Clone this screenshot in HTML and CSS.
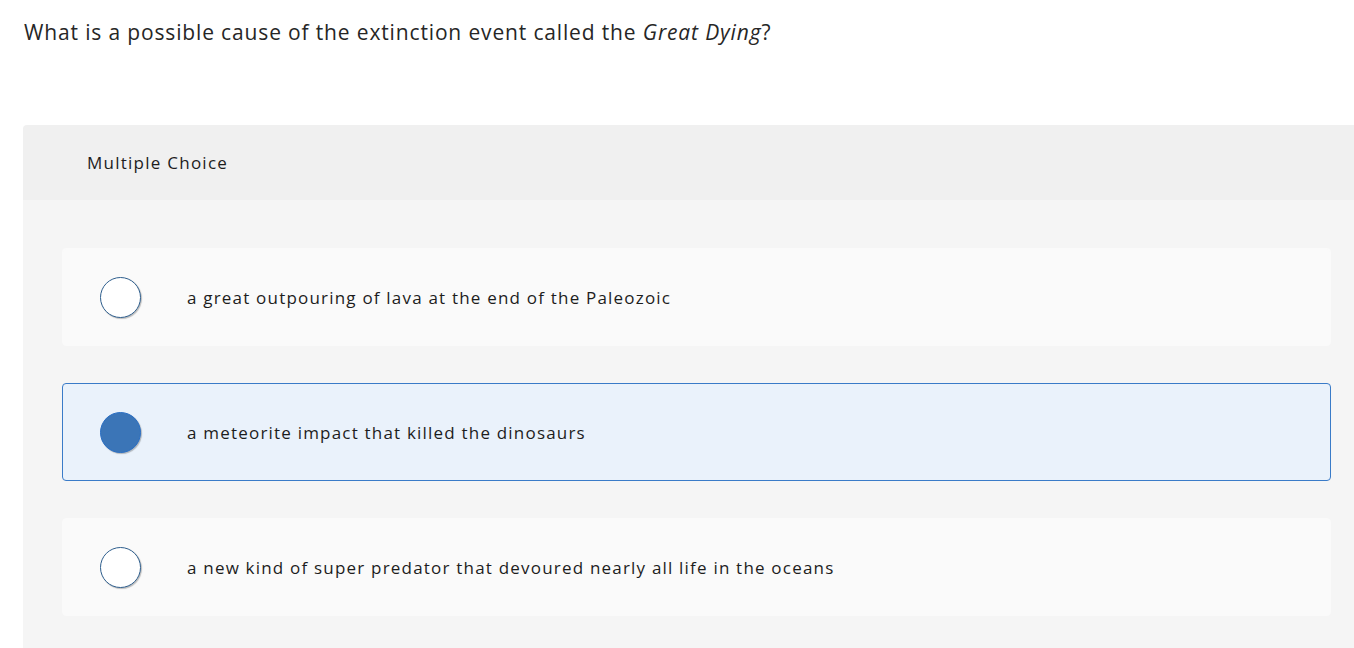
FILE: index.html
```html
<!DOCTYPE html>
<html>
    <head>
        <meta charset="utf-8">
        <title>Question</title>
        <link rel="stylesheet" href="styles.css">
    </head>
    <body>
        <div class="prompt">
            <p>What is a possible cause of the extinction event called the <em>Great Dying</em>?</p>
        </div>
        <div class="panel">
            <div class="panel-head">Multiple Choice</div>
            <div class="panel-body">
                <label class="choice">
                    <span class="radio"></span>
                    <span class="choice-text">a great outpouring of lava at the end of the Paleozoic</span>
                </label>
                <label class="choice selected">
                    <span class="radio"></span>
                    <span class="choice-text">a meteorite impact that killed the dinosaurs</span>
                </label>
                <label class="choice">
                    <span class="radio"></span>
                    <span class="choice-text">a new kind of super predator that devoured nearly all life in the oceans</span>
                </label>
            </div>
        </div>
    </body>
</html>
```

FILE: styles.css
```css
html, body {
    margin: 0px;
    background: #ffffff;
    overflow: hidden;
}
body {
    font-family: "Open Sans", Lato, sans-serif;
    color: #1f1f1f;
}
.prompt {
    padding: 18px 0px 0px 24px;
    box-sizing: border-box;
    height: 125px;
}
.prompt p {
    margin: 0px;
    font-size: 21px;
    line-height: 28px;
    letter-spacing: 0.85px;
    color: #262626;
}
.panel {
    margin-left: 23px;
    width: 1347px;
    border-radius: 4px 0px 0px 0px;
    overflow: hidden;
}
.panel-head {
    background: #f0f0f0;
    height: 75px;
    line-height: 75px;
    padding-left: 64px;
    font-size: 17px;
    letter-spacing: 1.25px;
    color: #1d1d1d;
}
.panel-body {
    background: #f5f5f5;
    padding: 48px 39px 40px 39px;
    display: flex;
    flex-direction: column;
    gap: 37px;
}
.choice {
    display: flex;
    align-items: center;
    height: 98px;
    box-sizing: border-box;
    padding-left: 37px;
    background: #fafafa;
    border: 1px solid #fafafa;
    border-radius: 4px;
    cursor: pointer;
}
.choice.selected {
    background: #eaf2fb;
    border-color: #3a7bc8;
}
.radio {
    width: 41px;
    height: 41px;
    box-sizing: border-box;
    border-radius: 50%;
    border: 1.5px solid #2f5f8e;
    background: #ffffff;
    box-shadow: 1px 1px 1px rgba(0, 0, 0, 0.25);
    flex-shrink: 0;
}
.choice.selected .radio {
    background: #3b75b7;
    border-color: #2a6fc4;
}
.choice-text {
    margin-left: 46px;
    font-size: 17px;
    letter-spacing: 1.2px;
    color: #1d1d1d;
}
```
